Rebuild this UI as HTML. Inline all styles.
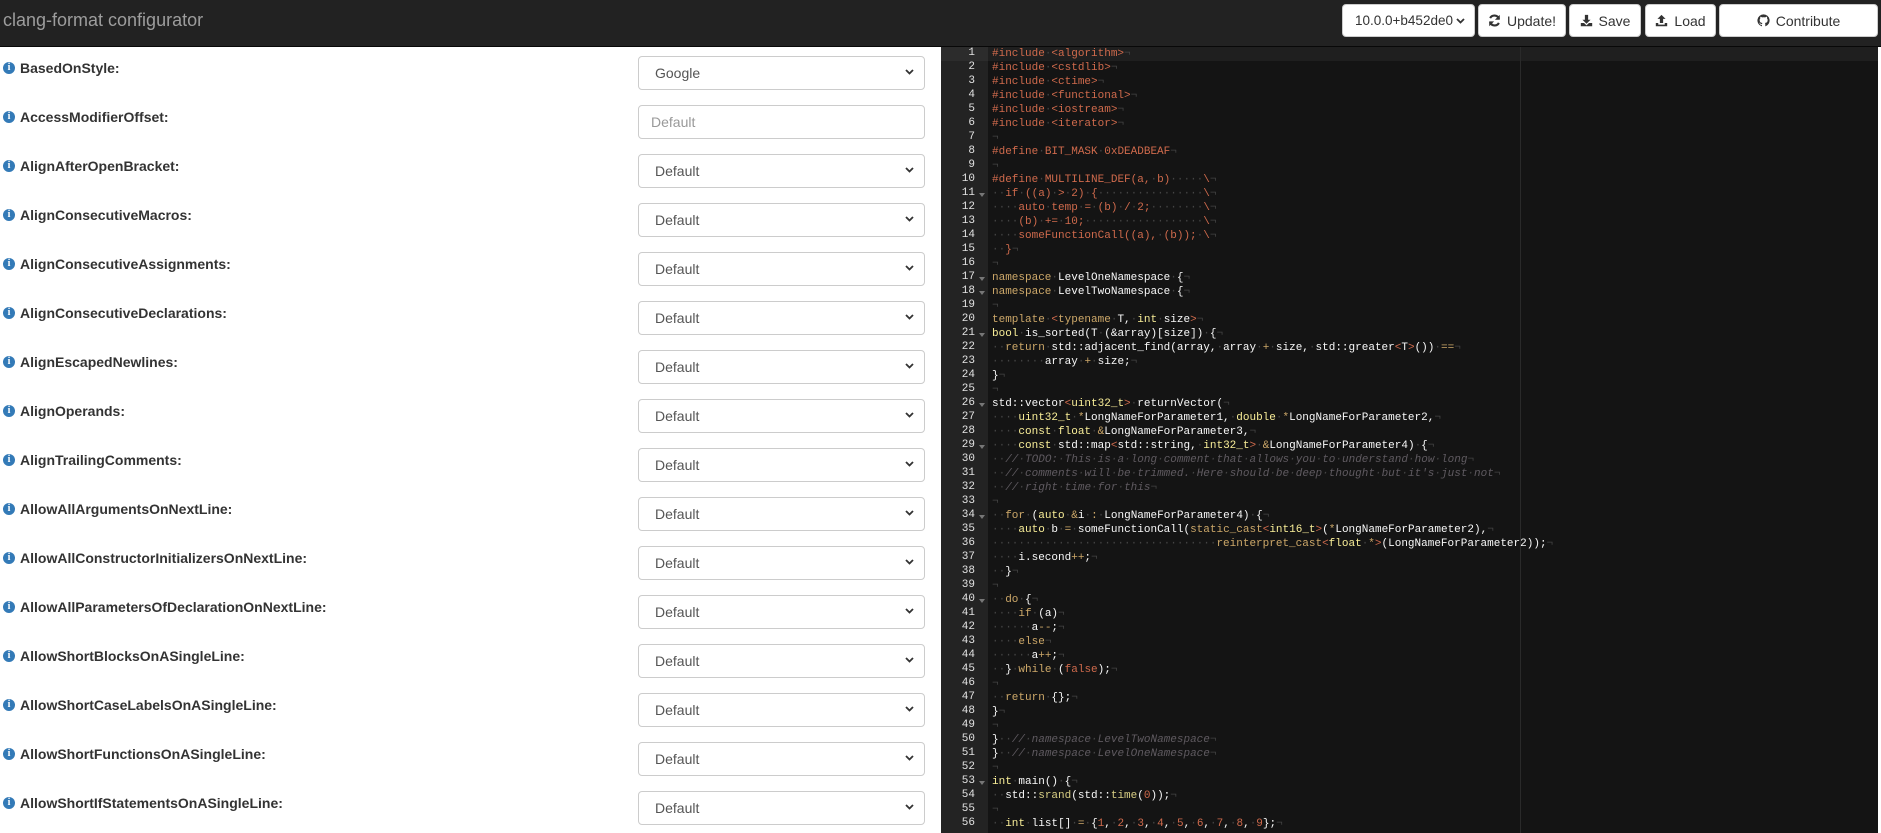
<!DOCTYPE html>
<html><head><meta charset="utf-8"><style>
*{box-sizing:border-box;margin:0;padding:0}
body{width:1881px;height:833px;overflow:hidden;background:#fff;font-family:"Liberation Sans",Arial,sans-serif;position:relative}
#hdr{position:absolute;left:0;top:0;width:1881px;height:47px;background:#222;border-bottom:1px solid #080808}
#title{position:absolute;left:3px;top:10px;font-size:18px;color:#9d9d9d}
.btn{position:absolute;top:4px;height:33px;background:#fff;border:1px solid #ccc;border-radius:4px;font-size:14px;color:#333;display:flex;align-items:center;justify-content:center;gap:6px}
.btn svg{display:block}
#left{position:absolute;left:0;top:47px;width:941px;height:786px;background:#fff;overflow:hidden}
.row{position:absolute;left:0;width:941px;height:49px}
.lbl{position:absolute;left:3px;top:13px;font-size:14px;font-weight:bold;color:#333;display:flex;align-items:center;gap:5px}
.ic{width:12px;height:12px;border-radius:50%;background:#337ab7;color:#fff;font-size:10px;font-weight:bold;font-family:"Liberation Serif",serif;display:flex;align-items:center;justify-content:center;line-height:1}
.sel{position:absolute;left:638px;top:9px;width:287px;height:34px;border:1px solid #ccc;border-radius:4px;font-size:14px;color:#555;padding-left:16px;display:flex;align-items:center}
.sel.ph{color:#999;padding-left:12px}
.sel .ch{position:absolute;right:10px;top:12px}
#ed{position:absolute;left:941px;top:47px;width:937px;height:786px;background:#141414;overflow:hidden}
#gut{position:absolute;left:0;top:0;width:47px;height:786px;background:#232323}
#gut div{height:14px;line-height:14px;font:11px "Liberation Mono",monospace;color:#e2e2e2;text-align:right;padding-right:13px;position:relative}
#gut div.a{background:#2c2c2c}
#gut div.f::after{content:"";position:absolute;right:3px;top:6px;border-left:3px solid transparent;border-right:3px solid transparent;border-top:4px solid #777}
#code{position:absolute;left:51px;top:0;font:11px "Liberation Mono",monospace;color:#f8f8f8}
#code div{height:14px;line-height:14px;white-space:pre}
#act{position:absolute;left:47px;top:0;width:890px;height:14px;background:#1f1f1f}
#pm{position:absolute;left:579px;top:0;width:1px;height:786px;background:#2a2a2a}
s{text-decoration:none;color:#454545}
.p{color:#cf6a4c}.k{color:#cda869}.t{color:#f9ee98}.n{color:#cf6a4c}.c{color:#5f5a60;font-style:italic}.f{color:#dad085}
</style></head><body>
<div id="hdr">
<div id="title">clang-format configurator</div>
<div class="btn" style="left:1342px;width:133px;justify-content:flex-start;padding-left:12px;font-size:13.5px">10.0.0+b452de0<svg style="position:absolute;right:9px;top:13px" width="9" height="6" viewBox="0 0 9 6"><path d="M1 1l3.5 3.5L8 1" stroke="#333" stroke-width="1.8" fill="none"/></svg></div>
<div class="btn" style="left:1478px;width:88px"><svg width="13" height="13" viewBox="0 0 16 16"><path d="M13.5 6A6 6 0 0 0 2.6 5M2.5 10a6 6 0 0 0 10.9 1" stroke="#333" stroke-width="2.6" fill="none"/><path d="M14.5 1v6h-6zM1.5 15v-6h6z" fill="#333"/></svg>Update!</div>
<div class="btn" style="left:1569px;width:72px"><svg width="13" height="13" viewBox="0 0 16 16"><path d="M6 1h4v6h3l-5 5-5-5h3z" fill="#333"/><path d="M1 11h4l3 3 3-3h4v4H1z" fill="#333"/></svg>Save</div>
<div class="btn" style="left:1645px;width:71px"><svg width="13" height="13" viewBox="0 0 16 16"><path d="M6 11h4V6h3L8 1 3 6h3z" fill="#333"/><path d="M1 11h3v2h8v-2h3v4H1z" fill="#333"/></svg>Load</div>
<div class="btn" style="left:1719px;width:159px"><svg width="13" height="13" viewBox="0 0 16 16"><path d="M8 .5a7.5 7.5 0 0 0-2.4 14.6c.4.1.5-.2.5-.4v-1.4c-2.100.5-2.500-1-2.500-1-.3-.9-.8-1.100-.8-1.100-.7-.5 0-.5 0-.5.8.1 1.200.8 1.200.8.7 1.200 1.800.8 2.200.6.1-.5.3-.8.5-1-1.700-.2-3.400-.8-3.400-3.700 0-.8.3-1.500.8-2-.1-.2-.3-1 .1-2 0 0 .6-.2 2.100.8a7 7 0 0 1 3.800 0c1.400-1 2.100-.8 2.100-.8.4 1 .2 1.800.1 2 .5.5.8 1.200.8 2 0 2.900-1.800 3.500-3.400 3.700.3.2.5.7.5 1.400v2.100c0 .2.1.5.5.4A7.5 7.5 0 0 0 8 .5z" fill="#333"/></svg>Contribute</div>
</div>

<div id="left">
<div class="row" style="top:0"><div class="lbl"><span class="ic">i</span>BasedOnStyle:</div><div class="sel">Google<svg class="ch" width="9" height="6" viewBox="0 0 9 6"><path d="M1 1l3.5 3.5L8 1" stroke="#333" stroke-width="1.8" fill="none"/></svg></div></div>
<div class="row" style="top:49px"><div class="lbl"><span class="ic">i</span>AccessModifierOffset:</div><div class="sel ph">Default</div></div>
<div class="row" style="top:98px"><div class="lbl"><span class="ic">i</span>AlignAfterOpenBracket:</div><div class="sel">Default<svg class="ch" width="9" height="6" viewBox="0 0 9 6"><path d="M1 1l3.5 3.5L8 1" stroke="#333" stroke-width="1.8" fill="none"/></svg></div></div>
<div class="row" style="top:147px"><div class="lbl"><span class="ic">i</span>AlignConsecutiveMacros:</div><div class="sel">Default<svg class="ch" width="9" height="6" viewBox="0 0 9 6"><path d="M1 1l3.5 3.5L8 1" stroke="#333" stroke-width="1.8" fill="none"/></svg></div></div>
<div class="row" style="top:196px"><div class="lbl"><span class="ic">i</span>AlignConsecutiveAssignments:</div><div class="sel">Default<svg class="ch" width="9" height="6" viewBox="0 0 9 6"><path d="M1 1l3.5 3.5L8 1" stroke="#333" stroke-width="1.8" fill="none"/></svg></div></div>
<div class="row" style="top:245px"><div class="lbl"><span class="ic">i</span>AlignConsecutiveDeclarations:</div><div class="sel">Default<svg class="ch" width="9" height="6" viewBox="0 0 9 6"><path d="M1 1l3.5 3.5L8 1" stroke="#333" stroke-width="1.8" fill="none"/></svg></div></div>
<div class="row" style="top:294px"><div class="lbl"><span class="ic">i</span>AlignEscapedNewlines:</div><div class="sel">Default<svg class="ch" width="9" height="6" viewBox="0 0 9 6"><path d="M1 1l3.5 3.5L8 1" stroke="#333" stroke-width="1.8" fill="none"/></svg></div></div>
<div class="row" style="top:343px"><div class="lbl"><span class="ic">i</span>AlignOperands:</div><div class="sel">Default<svg class="ch" width="9" height="6" viewBox="0 0 9 6"><path d="M1 1l3.5 3.5L8 1" stroke="#333" stroke-width="1.8" fill="none"/></svg></div></div>
<div class="row" style="top:392px"><div class="lbl"><span class="ic">i</span>AlignTrailingComments:</div><div class="sel">Default<svg class="ch" width="9" height="6" viewBox="0 0 9 6"><path d="M1 1l3.5 3.5L8 1" stroke="#333" stroke-width="1.8" fill="none"/></svg></div></div>
<div class="row" style="top:441px"><div class="lbl"><span class="ic">i</span>AllowAllArgumentsOnNextLine:</div><div class="sel">Default<svg class="ch" width="9" height="6" viewBox="0 0 9 6"><path d="M1 1l3.5 3.5L8 1" stroke="#333" stroke-width="1.8" fill="none"/></svg></div></div>
<div class="row" style="top:490px"><div class="lbl"><span class="ic">i</span>AllowAllConstructorInitializersOnNextLine:</div><div class="sel">Default<svg class="ch" width="9" height="6" viewBox="0 0 9 6"><path d="M1 1l3.5 3.5L8 1" stroke="#333" stroke-width="1.8" fill="none"/></svg></div></div>
<div class="row" style="top:539px"><div class="lbl"><span class="ic">i</span>AllowAllParametersOfDeclarationOnNextLine:</div><div class="sel">Default<svg class="ch" width="9" height="6" viewBox="0 0 9 6"><path d="M1 1l3.5 3.5L8 1" stroke="#333" stroke-width="1.8" fill="none"/></svg></div></div>
<div class="row" style="top:588px"><div class="lbl"><span class="ic">i</span>AllowShortBlocksOnASingleLine:</div><div class="sel">Default<svg class="ch" width="9" height="6" viewBox="0 0 9 6"><path d="M1 1l3.5 3.5L8 1" stroke="#333" stroke-width="1.8" fill="none"/></svg></div></div>
<div class="row" style="top:637px"><div class="lbl"><span class="ic">i</span>AllowShortCaseLabelsOnASingleLine:</div><div class="sel">Default<svg class="ch" width="9" height="6" viewBox="0 0 9 6"><path d="M1 1l3.5 3.5L8 1" stroke="#333" stroke-width="1.8" fill="none"/></svg></div></div>
<div class="row" style="top:686px"><div class="lbl"><span class="ic">i</span>AllowShortFunctionsOnASingleLine:</div><div class="sel">Default<svg class="ch" width="9" height="6" viewBox="0 0 9 6"><path d="M1 1l3.5 3.5L8 1" stroke="#333" stroke-width="1.8" fill="none"/></svg></div></div>
<div class="row" style="top:735px"><div class="lbl"><span class="ic">i</span>AllowShortIfStatementsOnASingleLine:</div><div class="sel">Default<svg class="ch" width="9" height="6" viewBox="0 0 9 6"><path d="M1 1l3.5 3.5L8 1" stroke="#333" stroke-width="1.8" fill="none"/></svg></div></div>
</div>

<div id="ed">
<div id="gut">
<div class="a">1</div><div>2</div><div>3</div><div>4</div><div>5</div><div>6</div><div>7</div><div>8</div><div>9</div><div>10</div><div class="f">11</div><div>12</div><div>13</div><div>14</div><div>15</div><div>16</div><div class="f">17</div><div class="f">18</div><div>19</div><div>20</div><div class="f">21</div><div>22</div><div>23</div><div>24</div><div>25</div><div class="f">26</div><div>27</div><div>28</div><div class="f">29</div><div>30</div><div>31</div><div>32</div><div>33</div><div class="f">34</div><div>35</div><div>36</div><div>37</div><div>38</div><div>39</div><div class="f">40</div><div>41</div><div>42</div><div>43</div><div>44</div><div>45</div><div>46</div><div>47</div><div>48</div><div>49</div><div>50</div><div>51</div><div>52</div><div class="f">53</div><div>54</div><div>55</div><div>56</div>
</div>
<div id="act"></div>
<div id="pm"></div>
<div id="code"><div class="p">#include<s>·</s>&lt;algorithm&gt;<s>¬</s></div><div class="p">#include<s>·</s>&lt;cstdlib&gt;<s>¬</s></div><div class="p">#include<s>·</s>&lt;ctime&gt;<s>¬</s></div><div class="p">#include<s>·</s>&lt;functional&gt;<s>¬</s></div><div class="p">#include<s>·</s>&lt;iostream&gt;<s>¬</s></div><div class="p">#include<s>·</s>&lt;iterator&gt;<s>¬</s></div><div><s>¬</s></div><div class="p">#define<s>·</s>BIT_MASK<s>·</s>0xDEADBEAF<s>¬</s></div><div><s>¬</s></div><div class="p">#define<s>·</s>MULTILINE_DEF(a,<s>·</s>b)<s>·····</s>\<s>¬</s></div><div class="p"><s>··</s>if<s>·</s>((a)<s>·</s>&gt;<s>·</s>2)<s>·</s>{<s>················</s>\<s>¬</s></div><div class="p"><s>····</s>auto<s>·</s>temp<s>·</s>=<s>·</s>(b)<s>·</s>/<s>·</s>2;<s>········</s>\<s>¬</s></div><div class="p"><s>····</s>(b)<s>·</s>+=<s>·</s>10;<s>··················</s>\<s>¬</s></div><div class="p"><s>····</s>someFunctionCall((a),<s>·</s>(b));<s>·</s>\<s>¬</s></div><div class="p"><s>··</s>}<s>¬</s></div><div><s>¬</s></div><div><span class="k">namespace</span><s>·</s>LevelOneNamespace<s>·</s>{<s>¬</s></div><div><span class="k">namespace</span><s>·</s>LevelTwoNamespace<s>·</s>{<s>¬</s></div><div><s>¬</s></div><div><span class="k">template</span><s>·</s><span class="p">&lt;</span><span class="k">typename</span><s>·</s>T,<s>·</s><span class="t">int</span><s>·</s>size<span class="p">&gt;</span><s>¬</s></div><div><span class="t">bool</span><s>·</s>is_sorted(T<s>·</s>(&amp;array)[size])<s>·</s>{<s>¬</s></div><div><s>··</s><span class="k">return</span><s>·</s>std::adjacent_find(array,<s>·</s>array<s>·</s><span class="k">+</span><s>·</s>size,<s>·</s>std::greater<span class="p">&lt;</span>T<span class="p">&gt;</span>())<s>·</s><span class="k">==</span><s>¬</s></div><div><s>········</s>array<s>·</s><span class="k">+</span><s>·</s>size;<s>¬</s></div><div>}<s>¬</s></div><div><s>¬</s></div><div>std::vector<span class="p">&lt;</span><span class="t">uint32_t</span><span class="p">&gt;</span><s>·</s>returnVector(<s>¬</s></div><div><s>····</s><span class="t">uint32_t</span><s>·</s><span class="k">*</span>LongNameForParameter1,<s>·</s><span class="t">double</span><s>·</s><span class="k">*</span>LongNameForParameter2,<s>¬</s></div><div><s>····</s><span class="t">const</span><s>·</s><span class="t">float</span><s>·</s><span class="k">&amp;</span>LongNameForParameter3,<s>¬</s></div><div><s>····</s><span class="t">const</span><s>·</s>std::map<span class="p">&lt;</span>std::string,<s>·</s><span class="t">int32_t</span><span class="p">&gt;</span><s>·</s><span class="k">&amp;</span>LongNameForParameter4)<s>·</s>{<s>¬</s></div><div><s>··</s><span class="c">//<s>·</s>TODO:<s>·</s>This<s>·</s>is<s>·</s>a<s>·</s>long<s>·</s>comment<s>·</s>that<s>·</s>allows<s>·</s>you<s>·</s>to<s>·</s>understand<s>·</s>how<s>·</s>long</span><s>¬</s></div><div><s>··</s><span class="c">//<s>·</s>comments<s>·</s>will<s>·</s>be<s>·</s>trimmed.<s>·</s>Here<s>·</s>should<s>·</s>be<s>·</s>deep<s>·</s>thought<s>·</s>but<s>·</s>it's<s>·</s>just<s>·</s>not</span><s>¬</s></div><div><s>··</s><span class="c">//<s>·</s>right<s>·</s>time<s>·</s>for<s>·</s>this</span><s>¬</s></div><div><s>¬</s></div><div><s>··</s><span class="k">for</span><s>·</s>(<span class="t">auto</span><s>·</s><span class="k">&amp;</span>i<s>·</s><span class="k">:</span><s>·</s>LongNameForParameter4)<s>·</s>{<s>¬</s></div><div><s>····</s><span class="t">auto</span><s>·</s>b<s>·</s><span class="k">=</span><s>·</s>someFunctionCall(<span class="k">static_cast</span><span class="p">&lt;</span><span class="t">int16_t</span><span class="p">&gt;</span>(<span class="k">*</span>LongNameForParameter2),<s>¬</s></div><div><s>··································</s><span class="k">reinterpret_cast</span><span class="p">&lt;</span><span class="t">float</span><s>·</s><span class="k">*</span><span class="p">&gt;</span>(LongNameForParameter2));<s>¬</s></div><div><s>····</s>i.second<span class="k">++</span>;<s>¬</s></div><div><s>··</s>}<s>¬</s></div><div><s>¬</s></div><div><s>··</s><span class="k">do</span><s>·</s>{<s>¬</s></div><div><s>····</s><span class="k">if</span><s>·</s>(a)<s>¬</s></div><div><s>······</s>a<span class="k">--</span>;<s>¬</s></div><div><s>····</s><span class="k">else</span><s>¬</s></div><div><s>······</s>a<span class="k">++</span>;<s>¬</s></div><div><s>··</s>}<s>·</s><span class="k">while</span><s>·</s>(<span class="n">false</span>);<s>¬</s></div><div><s>¬</s></div><div><s>··</s><span class="k">return</span><s>·</s>{};<s>¬</s></div><div>}<s>¬</s></div><div><s>¬</s></div><div>}<s>··</s><span class="c">//<s>·</s>namespace<s>·</s>LevelTwoNamespace</span><s>¬</s></div><div>}<s>··</s><span class="c">//<s>·</s>namespace<s>·</s>LevelOneNamespace</span><s>¬</s></div><div><s>¬</s></div><div><span class="t">int</span><s>·</s>main()<s>·</s>{<s>¬</s></div><div><s>··</s>std::<span class="f">srand</span>(std::<span class="f">time</span>(<span class="n">0</span>));<s>¬</s></div><div><s>¬</s></div><div><s>··</s><span class="t">int</span><s>·</s>list[]<s>·</s><span class="k">=</span><s>·</s>{<span class="n">1</span>,<s>·</s><span class="n">2</span>,<s>·</s><span class="n">3</span>,<s>·</s><span class="n">4</span>,<s>·</s><span class="n">5</span>,<s>·</s><span class="n">6</span>,<s>·</s><span class="n">7</span>,<s>·</s><span class="n">8</span>,<s>·</s><span class="n">9</span>};<s>¬</s></div></div>
</div>
</body></html>
